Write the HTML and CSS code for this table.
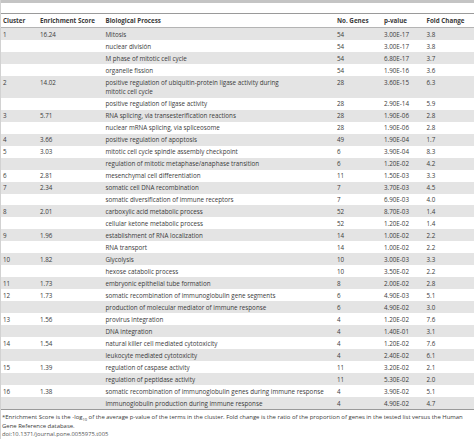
FILE: index.html
```html
<!DOCTYPE html>
<html lang="en">
<head>
    <meta charset="UTF-8">
    <title>Table 5</title>
    <link rel="stylesheet" href="styles.css">
</head>
<body>
    <div class="page">
        <div class="top-band"></div>

        <table class="data-table">
            <colgroup>
                <col class="c-cluster">
                <col class="c-score">
                <col class="c-process">
                <col class="c-genes">
                <col class="c-pvalue">
                <col class="c-fold">
            </colgroup>
            <thead>
                <tr>
                    <th>Cluster</th>
                    <th>Enrichment Score</th>
                    <th>Biological Process</th>
                    <th>No. Genes</th>
                    <th>p-value</th>
                    <th>Fold Change</th>
                </tr>
            </thead>
            <tbody>
                <tr><td>1</td><td>16.24</td><td>Mitosis</td><td>54</td><td>3.00E-17</td><td>3.8</td></tr>
                <tr><td></td><td></td><td>nuclear división</td><td>54</td><td>3.00E-17</td><td>3.8</td></tr>
                <tr><td></td><td></td><td>M phase of mitotic cell cycle</td><td>54</td><td>6.80E-17</td><td>3.7</td></tr>
                <tr><td></td><td></td><td>organelle fission</td><td>54</td><td>1.90E-16</td><td>3.6</td></tr>
                <tr><td>2</td><td>14.02</td><td>positive regulation of ubiquitin-protein ligase activity during<br>mitotic cell cycle</td><td>28</td><td>3.60E-15</td><td>6.3</td></tr>
                <tr><td></td><td></td><td>positive regulation of ligase activity</td><td>28</td><td>2.90E-14</td><td>5.9</td></tr>
                <tr><td>3</td><td>5.71</td><td>RNA splicing, via transesterification reactions</td><td>28</td><td>1.90E-06</td><td>2.8</td></tr>
                <tr><td></td><td></td><td>nuclear mRNA splicing, via spliceosome</td><td>28</td><td>1.90E-06</td><td>2.8</td></tr>
                <tr><td>4</td><td>3.66</td><td>positive regulation of apoptosis</td><td>49</td><td>1.90E-04</td><td>1.7</td></tr>
                <tr><td>5</td><td>3.03</td><td>mitotic cell cycle spindle assembly checkpoint</td><td>6</td><td>3.90E-04</td><td>8.3</td></tr>
                <tr><td></td><td></td><td>regulation of mitotic metaphase/anaphase transition</td><td>6</td><td>1.20E-02</td><td>4.2</td></tr>
                <tr><td>6</td><td>2.81</td><td>mesenchymal cell differentiation</td><td>11</td><td>1.50E-03</td><td>3.3</td></tr>
                <tr><td>7</td><td>2.34</td><td>somatic cell DNA recombination</td><td>7</td><td>3.70E-03</td><td>4.5</td></tr>
                <tr><td></td><td></td><td>somatic diversification of immune receptors</td><td>7</td><td>6.90E-03</td><td>4.0</td></tr>
                <tr><td>8</td><td>2.01</td><td>carboxylic acid metabolic process</td><td>52</td><td>8.70E-03</td><td>1.4</td></tr>
                <tr><td></td><td></td><td>cellular ketone metabolic process</td><td>52</td><td>1.20E-02</td><td>1.4</td></tr>
                <tr><td>9</td><td>1.96</td><td>establishment of RNA localization</td><td>14</td><td>1.00E-02</td><td>2.2</td></tr>
                <tr><td></td><td></td><td>RNA transport</td><td>14</td><td>1.00E-02</td><td>2.2</td></tr>
                <tr><td>10</td><td>1.82</td><td>Glycolysis</td><td>10</td><td>3.00E-03</td><td>3.3</td></tr>
                <tr><td></td><td></td><td>hexose catabolic process</td><td>10</td><td>3.50E-02</td><td>2.2</td></tr>
                <tr><td>11</td><td>1.73</td><td>embryonic epithelial tube formation</td><td>8</td><td>2.00E-02</td><td>2.8</td></tr>
                <tr><td>12</td><td>1.73</td><td>somatic recombination of immunoglobulin gene segments</td><td>6</td><td>4.90E-03</td><td>5.1</td></tr>
                <tr><td></td><td></td><td>production of molecular mediator of immune response</td><td>6</td><td>4.90E-02</td><td>3.0</td></tr>
                <tr><td>13</td><td>1.56</td><td>provirus integration</td><td>4</td><td>1.20E-02</td><td>7.6</td></tr>
                <tr><td></td><td></td><td>DNA integration</td><td>4</td><td>1.40E-01</td><td>3.1</td></tr>
                <tr><td>14</td><td>1.54</td><td>natural killer cell mediated cytotoxicity</td><td>4</td><td>1.20E-02</td><td>7.6</td></tr>
                <tr><td></td><td></td><td>leukocyte mediated cytotoxicity</td><td>4</td><td>2.40E-02</td><td>6.1</td></tr>
                <tr><td>15</td><td>1.39</td><td>regulation of caspase activity</td><td>11</td><td>3.20E-02</td><td>2.1</td></tr>
                <tr><td></td><td></td><td>regulation of peptidase activity</td><td>11</td><td>5.30E-02</td><td>2.0</td></tr>
                <tr><td>16</td><td>1.38</td><td>somatic recombination of immunoglobulin genes during immune response</td><td>4</td><td>3.90E-02</td><td>5.1</td></tr>
                <tr><td></td><td></td><td>immunoglobulin production during immune response</td><td>4</td><td>4.90E-02</td><td>4.7</td></tr>
            </tbody>
        </table>

        <div class="table-notes">
            <p class="footnote">*Enrichment Score is the -log<sub>10</sub> of the average p-value of the terms in the cluster. Fold change is the ratio of the proportion of genes in the tested list versus the Human<br>Gene Reference database.</p>
            <p class="doi">doi:10.1371/journal.pone.0055975.t005</p>
        </div>
    </div>
</body>
</html>
```

FILE: styles.css
```css
/* General */
body {
    margin: 0;
    padding: 0;
    background: #ffffff;
    font-family: 'Open Sans', 'Liberation Sans', sans-serif;
    color: #3a3a3a;
}

.page {
    width: 473px;
    height: 439px;
    border-left: 1px solid #d2d2d2;
    overflow: hidden;
}

.top-band {
    height: 3px;
    background: #c4c4c4;
    margin-bottom: 9.5px;
}

/* Table */
.data-table {
    width: 473px;
    table-layout: fixed;
    border-collapse: collapse;
    border-top: 1px solid #9a9a9a;
    border-bottom: 1px solid #9a9a9a;
    font-size: 6.25px;
    line-height: 9.4px;
}

.c-cluster { width: 37px; }
.c-score { width: 65.5px; }
.c-process { width: 231.5px; }
.c-genes { width: 47px; }
.c-pvalue { width: 42.5px; }
.c-fold { width: 49.5px; }

.data-table th {
    text-align: left;
    font-weight: bold;
    padding: 2.8px 0 1.6px 2px;
    border-bottom: 1px solid #b4b4b4;
    white-space: nowrap;
}

.data-table td {
    padding: 1.32px 0 1.28px 2px;
    vertical-align: top;
    white-space: nowrap;
}

.data-table tbody tr:nth-child(odd) {
    background: #e4e4e4;
}

/* Notes */
.table-notes {
    padding: 3.2px 0 0 1px;
    font-size: 5.95px;
}

.footnote {
    margin: 0;
    line-height: 9px;
    white-space: nowrap;
}

.footnote sub {
    font-size: 4px;
    line-height: 0;
}

.doi {
    margin: 0;
    font-size: 5.8px;
    line-height: 7px;
    color: #555555;
}
```
